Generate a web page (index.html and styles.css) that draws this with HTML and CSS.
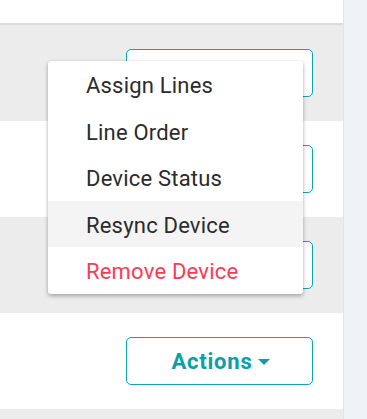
FILE: index.html
```html
<!DOCTYPE html>
<html lang="en">
<head>
  <meta charset="UTF-8" />
  <meta name="viewport" content="width=device-width, initial-scale=1" />
  <title>Devices</title>
  <link rel="stylesheet" href="styles.css">
</head>
<body>

<div class="page">
  <main class="device-list">
    <div class="row row-top"></div>
    <div class="row shaded">
      <button class="actions">Actions <span class="caret"></span></button>
    </div>
    <div class="row">
      <button class="actions">Actions <span class="caret"></span></button>
    </div>
    <div class="row shaded">
      <button class="actions">Actions <span class="caret"></span></button>
    </div>
    <div class="row">
      <button class="actions">Actions <span class="caret"></span></button>
    </div>
    <div class="row shaded"></div>
  </main>
  <aside class="side"></aside>
</div>

<ul class="menu">
  <li>Assign Lines</li>
  <li>Line Order</li>
  <li>Device Status</li>
  <li class="hover">Resync Device</li>
  <li class="danger">Remove Device</li>
</ul>

</body>
</html>
```

FILE: styles.css
```css
body {
  margin: 0;
  font-family: Roboto, "Liberation Sans", sans-serif;
  background: #fff;
  overflow: hidden;
}
.page {
  display: flex;
  height: 419px;
  overflow: hidden;
}
.device-list {
  width: 343px;
  display: flex;
  flex-direction: column;
}
.side {
  flex: 1;
  background: #eff3f6;
  border-left: 1px solid #e2e4e6;
}
.row {
  flex: 0 0 96px;
  display: flex;
  align-items: center;
  justify-content: flex-end;
  padding-right: 30px;
  background: #fff;
}
.row.shaded {
  background: #ececec;
}
.row-top {
  flex: 0 0 23px;
  border-bottom: 2px solid #dcdcdc;
}
.actions {
  width: 187px;
  height: 48px;
  background: #fff;
  border: 1px solid #0ea5ae;
  border-radius: 5px;
  color: #0aa0a9;
  font-family: Roboto, "Liberation Sans", sans-serif;
  font-weight: 700;
  font-size: 22px;
  letter-spacing: 0.8px;
  display: flex;
  align-items: center;
  justify-content: center;
  gap: 5px;
  padding: 0 0 0 2px;
  cursor: pointer;
}
.caret {
  width: 0;
  height: 0;
  border-left: 6px solid transparent;
  border-right: 6px solid transparent;
  border-top: 6px solid #0aa0a9;
  margin-top: 1px;
}

/* dropdown */
.menu {
  position: absolute;
  left: 48px;
  top: 61px;
  width: 255px;
  margin: 0;
  padding: 0;
  list-style: none;
  background: #fff;
  border-radius: 3px;
  box-shadow: 0 2px 4px rgba(0, 0, 0, 0.3), 0 0 2px rgba(0, 0, 0, 0.08);
}
.menu li {
  box-sizing: border-box;
  height: 46.6px;
  padding: 3px 0 0 38px;
  line-height: 43.6px;
  font-size: 22px;
  letter-spacing: 0.2px;
  color: #2b2b2b;
}
.menu li.hover {
  background: #f4f4f4;
}
.menu li.danger {
  color: #fb3b55;
}
```
